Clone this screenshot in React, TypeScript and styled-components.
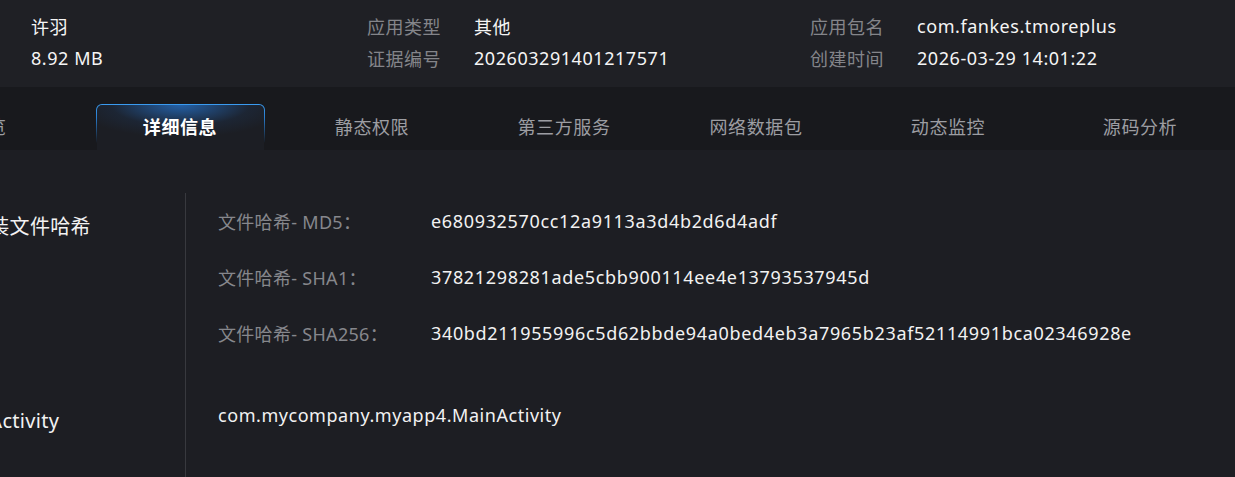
import React from "react";
import styled, { createGlobalStyle } from "styled-components";

const GlobalStyle = createGlobalStyle`
  html, body {
    margin: 0;
    padding: 0;
    background: #1d1e23;
  }
  body {
    font-family: "Noto Sans", "Noto Sans CJK SC", sans-serif;
    color: #f2f2f2;
    overflow: hidden;
  }
`;

const Page = styled.div`
  width: 1235px;
  height: 477px;
  overflow: hidden;
  background: #1d1e23;
`;

const Header = styled.div`
  display: grid;
  grid-template-columns: 336px 443px 1fr;
  padding: 10px 0 13px 31px;
  background: #1f2025;
`;

const InfoCol = styled.div`
  display: flex;
  flex-direction: column;
`;

const InfoRow = styled.div`
  display: flex;
  height: 32px;
  align-items: center;
  font-size: 18px;
`;

const InfoLabel = styled.span`
  width: 107px;
  color: #84858a;
  letter-spacing: 0.5px;
`;

const InfoValue = styled.span`
  color: #f5f5f5;
  letter-spacing: 0.55px;
`;

const TabBar = styled.div`
  display: flex;
  align-items: flex-end;
  height: 63px;
  margin-left: -108px;
  background: #18191d;
`;

const Tab = styled.div`
  flex: 0 0 192px;
  height: 46px;
  display: flex;
  justify-content: center;
`;

const TabInner = styled.div<{ $active?: boolean }>`
  width: 169px;
  height: 46px;
  box-sizing: border-box;
  padding-bottom: 4px;
  display: flex;
  align-items: center;
  justify-content: center;
  font-size: 18px;
  letter-spacing: 0.6px;
  color: ${({ $active }) => ($active ? "#ffffff" : "#9c9da2")};
  font-weight: ${({ $active }) => ($active ? 700 : 400)};
  border-radius: 6px 6px 0 0;
  border: 1px solid transparent;
  border-bottom: none;
  background: ${({ $active }) =>
    $active
      ? `radial-gradient(ellipse 75% 85% at 50% 0%, rgba(38, 118, 210, 0.75), rgba(30, 60, 100, 0.25) 55%, rgba(30, 33, 40, 0) 85%) padding-box,
         linear-gradient(#1c1e24, #1c1e24) padding-box,
         linear-gradient(to bottom, #3a9cf2 0%, #2a7ccc 30%, rgba(40, 110, 190, 0) 85%) border-box`
      : "transparent"};
`;

const Content = styled.div`
  display: grid;
  grid-template-columns: 185px 1fr;
  margin-top: 43px;
`;

const SideTitle = styled.div`
  margin-left: -31px;
  padding-top: 19px;
  line-height: 30px;
  font-size: 20px;
  letter-spacing: 0.3px;
  color: #f2f2f2;
  white-space: nowrap;
`;

const Section = styled.div<{ $gap?: number }>`
  border-left: 1px solid #38393e;
  padding: 0 0 ${({ $gap }) => $gap ?? 0}px 32px;
  min-height: 90px;
`;

const Row = styled.div`
  display: flex;
  align-items: center;
  height: 56px;
  font-size: 18px;
`;

const RowLabel = styled.span`
  width: 213px;
  flex: 0 0 213px;
  color: #86878c;
  letter-spacing: 0.3px;
  white-space: nowrap;
`;

const RowValue = styled.span<{ $mono?: boolean }>`
  color: #f2f2f2;
  letter-spacing: ${({ $mono }) => ($mono ? "0.66px" : "0.55px")};
  white-space: nowrap;
`;

const tabs = ["概览", "详细信息", "静态权限", "第三方服务", "网络数据包", "动态监控", "源码分析"];

const hashes = [
  { label: "文件哈希- MD5：", value: "e680932570cc12a9113a3d4b2d6d4adf" },
  { label: "文件哈希- SHA1：", value: "37821298281ade5cbb900114ee4e13793537945d" },
  {
    label: "文件哈希- SHA256：",
    value: "340bd211955996c5d62bbde94a0bed4eb3a7965b23af52114991bca02346928e",
  },
];

export default function App() {
  return (
    <Page>
      <GlobalStyle />
      <Header>
        <InfoCol>
          <InfoRow>
            <InfoValue>许羽</InfoValue>
          </InfoRow>
          <InfoRow>
            <InfoValue>8.92 MB</InfoValue>
          </InfoRow>
        </InfoCol>
        <InfoCol>
          <InfoRow>
            <InfoLabel>应用类型</InfoLabel>
            <InfoValue>其他</InfoValue>
          </InfoRow>
          <InfoRow>
            <InfoLabel>证据编号</InfoLabel>
            <InfoValue>202603291401217571</InfoValue>
          </InfoRow>
        </InfoCol>
        <InfoCol>
          <InfoRow>
            <InfoLabel>应用包名</InfoLabel>
            <InfoValue>com.fankes.tmoreplus</InfoValue>
          </InfoRow>
          <InfoRow>
            <InfoLabel>创建时间</InfoLabel>
            <InfoValue>2026-03-29 14:01:22</InfoValue>
          </InfoRow>
        </InfoCol>
      </Header>

      <TabBar>
        {tabs.map((t, i) => (
          <Tab key={t}>
            <TabInner $active={i === 1}>{t}</TabInner>
          </Tab>
        ))}
      </TabBar>

      <Content>
        <SideTitle>安装文件哈希</SideTitle>
        <Section $gap={26}>
          {hashes.map((h) => (
            <Row key={h.label}>
              <RowLabel>{h.label}</RowLabel>
              <RowValue $mono>{h.value}</RowValue>
            </Row>
          ))}
        </Section>
        <SideTitle>主Activity</SideTitle>
        <Section>
          <Row>
            <RowValue>com.mycompany.myapp4.MainActivity</RowValue>
          </Row>
        </Section>
      </Content>
    </Page>
  );
}
